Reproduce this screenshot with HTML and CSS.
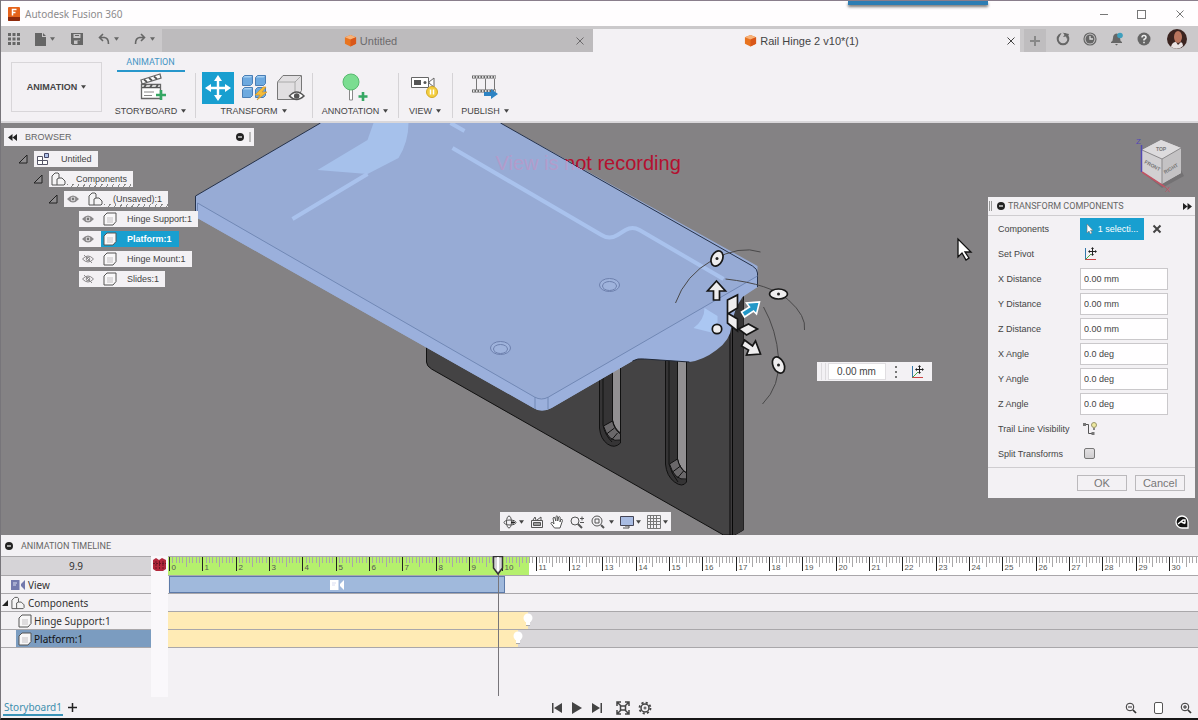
FILE: index.html
```html
<!DOCTYPE html>
<html lang="en">
<head>
<meta charset="utf-8">
<title>Autodesk Fusion 360</title>
<link rel="stylesheet" href="styles.css">
</head>
<body>
<svg class="defs" aria-hidden="true">
  <symbol id="cube" viewBox="0 0 14 14"><path d="M7 1l6 2.500v7L7 13.500 1 10.500v-7z" fill="#e8741f"/><path d="M7 1l6 2.500L7 6 1 3.500z" fill="#f7b27a"/><path d="M7 6l6-2.500v7L7 13.500z" fill="#d9571a"/></symbol>
  <symbol id="close" viewBox="0 0 10 10"><path d="M1.500 1.500l7 7M8.500 1.500l-7 7" stroke="currentColor" fill="none"/></symbol>
  <symbol id="caret" viewBox="0 0 6 4"><path d="M0 0h6L3 4z" fill="currentColor"/></symbol>
  <symbol id="minus" viewBox="0 0 8 8"><circle cx="4" cy="4" r="4" fill="#222"/><path d="M2 4h4" stroke="#fff" stroke-width="1.200"/></symbol>
  <symbol id="tri" viewBox="0 0 10 10"><path d="M9 1v8H1z" fill="#8f8d8f" stroke="#222"/></symbol>
  <symbol id="eye" viewBox="0 0 12 8"><path d="M0 4Q6-3 12 4Q6 11 0 4z" fill="#8a888a"/><circle cx="6" cy="4" r="2.300" fill="#e8e6e8"/><circle cx="6" cy="4" r="1.400" fill="#777"/></symbol>
  <symbol id="eyeoff" viewBox="0 0 12 8"><path d="M.500 4Q6-2 11.500 4Q6 10 .500 4z" fill="none" stroke="#8a888a"/><circle cx="6" cy="4" r="1.800" fill="none" stroke="#8a888a"/><path d="M2 0l8 8" stroke="#8a888a"/></symbol>
  <symbol id="body" viewBox="0 0 14 14"><path d="M4 1h9v8.500L10 13H1V4z" fill="#f8f7f8" stroke="#555" stroke-linejoin="round"/><path d="M4 5h6v6H4z" fill="#dedcde"/></symbol>
  <symbol id="comp" viewBox="0 0 15 14"><path d="M1 13V4l3-3h3l1 1v4h3l3 3v3l-1 1z" fill="#f5f4f5" stroke="#555" stroke-linejoin="round"/><path d="M6 13V7l2-1" fill="none" stroke="#555"/></symbol>
  <symbol id="pivot" viewBox="0 0 14 14"><path d="M2.500 1v11" stroke="#37a" /><path d="M2 12.500h11" stroke="#c44"/><path d="M2.500 12.500L8 7" stroke="#4a4"/><path d="M9.500 1v7M6 4.500h7" stroke="#222"/><path d="M8 2l1.500-2L11 2zM8 7l1.500 2L11 7zM7 3L5 4.500 7 6zM12 3l2 1.500L12 6z" fill="#222"/></symbol>
  <symbol id="cam" viewBox="0 0 14 10"><path d="M0 0h8.500v10H0zM10 4l4-4v10l-4-4z" fill="currentColor"/><path d="M2 3h4M2 5h3" stroke="#d9dcf0"/></symbol>
</svg>

<header class="titlebar">
  <svg class="logo" viewBox="0 0 12 14"><rect width="12" height="14" rx="1" fill="#e5621a"/><path d="M0 10h12v3a1 1 0 0 1-1 1H1a1 1 0 0 1-1-1z" fill="#8e2a0c"/><path d="M4.500 8.500V2.500h4M4.500 5.500h3" stroke="#fff" stroke-width="1.500" fill="none"/></svg>
  <span class="apptitle">Autodesk Fusion 360</span>
  <div class="notch"></div>
  <div class="winbtns">
    <button aria-label="Minimize"><svg width="10" height="10"><path d="M1 5.500h8" stroke="#777"/></svg></button>
    <button aria-label="Maximize"><svg width="10" height="10"><rect x=".500" y="1.500" width="8" height="8" fill="none" stroke="#777"/></svg></button>
    <button aria-label="Close"><svg width="10" height="10"><use href="#close"/></svg></button>
  </div>
</header>

<nav class="tabbar">
  <div class="quick">
    <button aria-label="Data panel"><svg width="12" height="12" fill="#666"><path d="M0 0h3v3H0zM4.500 0h3v3h-3zM9 0h3v3H9zM0 4.500h3v3H0zM4.500 4.500h3v3h-3zM9 4.500h3v3H9zM0 9h3v3H0zM4.500 9h3v3h-3zM9 9h3v3H9z"/></svg></button>
    <button class="wfile" aria-label="File"><svg width="11" height="13" fill="#666"><path d="M0 0h7v4h4v9H0zM8 0l3 3H8z"/></svg><svg class="caret"><use href="#caret"/></svg></button>
    <button class="wsave" aria-label="Save"><svg width="12" height="12"><path d="M0 0h12v12H1.500L0 10.500z" fill="#666"/><path d="M2.500 1h7v4h-7zM3 7.500h6V11H3z" fill="#c8c6c8"/><path d="M7 8h1.500v3H7zM4 2.500h4" stroke="#666" fill="#666"/></svg></button>
    <button class="wundo" aria-label="Undo"><svg width="12" height="12"><path d="M5 1L1.500 4.500 5 8M1.500 4.500h5Q10.500 5 10.500 11" fill="none" stroke="#666" stroke-width="1.600"/></svg><svg class="caret"><use href="#caret"/></svg></button>
    <button aria-label="Redo"><svg width="12" height="12"><path d="M7 1l3.500 3.500L7 8M10.500 4.500h-5Q1.500 5 1.500 11" fill="none" stroke="#666" stroke-width="1.600"/></svg><svg class="caret"><use href="#caret"/></svg></button>
  </div>
  <div class="tab"><span class="tablabel"><svg width="13" height="13"><use href="#cube"/></svg>Untitled</span><button aria-label="Close tab"><svg width="10" height="10"><use href="#close"/></svg></button></div>
  <div class="tab active"><span class="tablabel"><svg width="13" height="13"><use href="#cube"/></svg>Rail Hinge 2 v10*(1)</span><button aria-label="Close tab"><svg width="10" height="10"><use href="#close"/></svg></button></div>
  <div class="utils">
    <button class="plus" aria-label="New tab"><svg width="12" height="12"><path d="M6 1v10M1 6h10" stroke="#888" stroke-width="2"/></svg></button>
    <button aria-label="Extensions"><svg width="14" height="14"><circle cx="7" cy="7" r="5.300" fill="none" stroke="#666" stroke-width="2"/><path d="M6 0l5 5-3 3-4-4z" fill="#cbc9cb"/><path d="M8 1l5 1-2 5-1-2.500L7 5l1.500-2z" fill="#666"/></svg></button>
    <button aria-label="Job status"><svg width="14" height="14"><circle cx="7" cy="7" r="6" fill="none" stroke="#666" stroke-width="1.200"/><circle cx="7" cy="7" r="4.500" fill="#666"/><path d="M7 4v3h3" stroke="#ddd" fill="none" stroke-width="1.300"/></svg></button>
    <button aria-label="Notifications"><svg width="14" height="14"><path d="M1 10Q3 9 3 6Q3 2 6.500 1.500Q10 2 10 6Q10 9 12 10v1H1zM5 12h3l-1.500 1.500z" fill="#666"/><circle cx="10" cy="3.500" r="2.800" fill="#3e9fbd"/></svg></button>
    <button aria-label="Help"><svg width="14" height="14"><circle cx="7" cy="7" r="6.500" fill="#666"/><path d="M5 5.500Q5 3.500 7 3.500T9 5.500Q9 6.500 7 7.500V8.500M7 9.700v1.600" stroke="#eee" stroke-width="1.500" fill="none"/></svg></button>
    <button class="avatar" aria-label="Account"><svg width="20" height="20"><circle cx="10" cy="10" r="10" fill="#3b2420"/><ellipse cx="11" cy="8" rx="4" ry="6" fill="#b9755e"/><path d="M4 18Q5 13 9 13l2 3 3-3q2 1 2 4-5 5-12 1z" fill="#e9e2e2"/></svg></button>
  </div>
</nav>

<section class="ribbon">
  <button class="workspace">ANIMATION<svg class="caret"><use href="#caret"/></svg></button>
  <div class="group storyboard">
    <span class="rtab">ANIMATION</span>
    <div class="icons"><svg width="30" height="30"><g fill="#fff" stroke="#666" stroke-width="1.300"><path d="M5.500 12.500h19v14h-19zM5 8l19-6 1 4L6 12z"/></g><path d="M8 7.500l3 2.500M13 6l3 2.500M18 4.500l3 2.500M6 15.500h18M10 12.500l-2 3M16 12.500l-2 3M22 12.500l-2 3" stroke="#555" stroke-width="1.700"/><path d="M8 20h10M8 23.500h8" stroke="#888"/><path d="M25 18v10M20 23h10" stroke="#35a763" stroke-width="2.600"/></svg></div>
    <button class="rlabel">STORYBOARD<svg class="caret"><use href="#caret"/></svg></button>
  </div>
  <div class="group transform">
    <div class="icons">
      <svg width="32" height="32"><path d="M0 0h32v32H0z" fill="#189fd0"/><path d="M16 6v20M6 16h20" stroke="#fff" stroke-width="2.400"/><path d="M16 3l4 6h-8zM16 29l4-6h-8zM3 16l6-4v8zM29 16l-6-4v8z" fill="#fff"/></svg>
      <svg width="32" height="32"><g fill="#6da9df" stroke="#4a7eb5"><path d="M4.500 5.500l2-2h8v8l-2 2h-8zM17.500 5.500l2-2h8v8l-2 2h-8zM4.500 17.500l2-2h8v8l-2 2h-8zM17.500 17.500l2-2h8v8l-2 2h-8z"/></g><path d="M5 5.500l2-1.500h7l-1.500 1.500zM18 5.500l2-1.500h7l-1.500 1.500zM5 17.500l2-1.500h7l-1.500 1.500z" fill="#a7d1f3"/><path d="M25 15l-8 8h5l-3 5 10-8h-5l4-5z" fill="#f4bd3c" stroke="#d79526" stroke-width=".7"/></svg>
      <svg width="32" height="32"><path d="M3.500 10L9 3.500h18.500v15L22 27.500H3.500z" fill="#e1dfe1" stroke="#777"/><path d="M3.500 10H21l6.500-6.500M21 10v17" stroke="#aaa" fill="none"/><path d="M15.500 24Q22.500 16 30 24Q22.500 31 15.500 24z" fill="#fff" stroke="#555" stroke-width="1.500"/><circle cx="22.700" cy="24" r="2.800" fill="#555"/></svg>
    </div>
    <button class="rlabel">TRANSFORM<svg class="caret"><use href="#caret"/></svg></button>
  </div>
  <div class="group annotation">
    <div class="icons"><svg width="32" height="32"><path d="M10.500 17h3v11h-3z" fill="#fff" stroke="#888"/><circle cx="12" cy="10" r="8" fill="#7bdd91" stroke="#58b96f"/><path d="M24 20v9M19.500 24.500h9" stroke="#35a763" stroke-width="2.600"/></svg></div>
    <button class="rlabel">ANNOTATION<svg class="caret"><use href="#caret"/></svg></button>
  </div>
  <div class="group view">
    <div class="icons"><svg width="32" height="32"><path d="M2.500 5.500h17v10h-17zM20 10l5-4v9l-5-4z" fill="#fff" stroke="#666"/><path d="M5 8h7v5H5z" fill="#555"/><circle cx="16" cy="10.500" r="1.500" fill="#555"/><circle cx="23" cy="20" r="5.500" fill="#f4cf3f" stroke="#d3a927"/><path d="M21.500 17.500v5M24.500 17.500v5" stroke="#fff" stroke-width="1.500"/></svg></div>
    <button class="rlabel">VIEW<svg class="caret"><use href="#caret"/></svg></button>
  </div>
  <div class="group publish">
    <div class="icons"><svg width="32" height="32"><path d="M3 5h24M3 19h24" stroke="#666" stroke-width="3"/><path d="M4 5h23M4 19h23" stroke="#fff" stroke-width="1.400" stroke-dasharray="1.500 1.500"/><path d="M7.500 7v11M16.500 7v11M25.500 7v11" stroke="#777"/><path d="M15 20h7v-3l7 5-7 5v-3h-7z" fill="#2d83c3"/></svg></div>
    <button class="rlabel">PUBLISH<svg class="caret"><use href="#caret"/></svg></button>
  </div>
</section>

<main class="canvas">
  <svg class="scene" viewBox="0 123 1198 412" preserveAspectRatio="xMidYMid slice">
    <defs><linearGradient id="fade" gradientUnits="userSpaceOnUse" x1="575" y1="166" x2="583" y2="152"><stop offset="0" stop-color="#b29bca"/><stop offset="0" stop-color="#b4102f"/></linearGradient></defs>
    <path d="M426 340V362q0 4 5 7L723 535h11l9-5V294h-60z" fill="#444344" stroke="#111"/>
    <path d="M731 300h12v230l-9 5h-3z" fill="#363536"/><path d="M729.500 320v215M732 320v215" stroke="#080808"/>
    <g stroke="#111"><path d="M599 350v78q1 11 8 16t13-1V350z" fill="#353435"/><path d="M612 350v70q2 9 8 13V350z" fill="#929092"/><path d="M602.500 350v75q2 10 9 17" fill="none"/><path d="M603 426l9-5q2 9 8 13v6q-12 3-17-14z" fill="#6a686a"/><path d="M606 434l8-6M611 440l6-7" fill="none"/><path d="M665 350v114q1 12 9 18t12 0V350z" fill="#353435"/><path d="M677 350v109q2 9 9 14V350z" fill="#929092"/><path d="M668.500 350v114q2 9 9 18" fill="none"/><path d="M669 464l8-5q2 10 9 14v6q-12 2-17-15z" fill="#6a686a"/><path d="M672 472l8-6M677 478l6-7" fill="none"/></g>
    <path d="M320 123L195 196v21L533 408q8 5 18 0L632 361l125-74v-21L500 123z" fill="#97abd5"/>
    <path d="M195 200v17L533 408q8 5 18 0L632 361q5-3 12-2l45 3q14-2 27-12 14-10 15-24 2-16 11-29l15-10v-11L548 397q-7 4-14 0L197 203z" fill="#9bb0dc"/>
    <path d="M320 123L195 196v15M500 123L752 266q5 3 5 7v14" stroke="#26324a" fill="none"/>
    <path d="M197 203L534 397q7 4 14 0L757 276M197 203v13M534.500 397v12M547.500 397v12" fill="none" stroke="#7188b5"/>
    <path d="M632 361q5-3 12-2l45 3" fill="none" stroke="#202735"/>
    <path d="M373 123l-6 17-50 30 50 4 31-16q10-16 10-35z" fill="#a6c1eb"/>
    <path d="M367 174L292 219M450 123l14 8M452 148L601 235q8 5 16 0l8-5q7-4 14 0l84 49" fill="none" stroke="#a9c2ed" stroke-width="4"/>
    <path d="M704 308l13 8v18l-24-6q11-8 11-20z" fill="#abc7f2"/>
    <g fill="#9fb3dc" stroke="#6d80ad"><ellipse cx="609" cy="285" rx="10" ry="6.500"/><ellipse cx="609" cy="286" rx="7" ry="4.500"/><ellipse cx="500" cy="348" rx="10" ry="6.500"/><ellipse cx="500" cy="349" rx="7" ry="4.500"/></g>
    <text class="notice" x="495" y="170" fill="url(#fade)">View is not recording</text>
    <g fill="none" stroke="#494849"><path d="M675 303Q685 275 712 260T760 252M725 279Q770 284 788 300T804 330M763 307Q776 330 778 358T762 404"/></g>
    <g fill="#eeedee" stroke="#161616" stroke-width="1.700">
      <ellipse cx="716.500" cy="258.500" rx="5.500" ry="8" transform="rotate(25 716.500 258.500)"/><ellipse cx="778" cy="294" rx="9" ry="5"/><ellipse cx="778" cy="365" rx="5.500" ry="8.500" transform="rotate(-25 778 365)"/>
      <path d="M716 281l9 10h-6v9h-6v-9h-6zM727 300l10-5v13l-10 6zM727 313l10 6v12l-10-8zM738 329l10-5 9 5-11 6zM744 340l8 6 3-5 5 13-14 1 2-5-7-4z"/><circle cx="716.500" cy="329" r="4.700"/>
    </g>
    <path d="M741 312l8-5-3-4 13-1-3 12-3-3-9 6z" fill="#2398c8" stroke="#fff" stroke-width="1.600"/>
    <g fill="#222"><circle cx="716.500" cy="258.500" r="1.500"/><circle cx="778" cy="294" r="1.500"/><circle cx="778" cy="365" r="1.500"/></g>
    <path d="M957.500 239v18l4-4 4 7 3-2-4-6h6z" fill="#fff" stroke="#111" stroke-width="1.300"/>
  </svg>

  <aside class="browser">
    <header><svg width="9" height="7"><path d="M4.500 0v7L0 3.500zM9 0v7L4.500 3.500z" fill="#222"/></svg><span>BROWSER</span><svg class="dot"><use href="#minus"/></svg><i></i></header>
    <ul>
      <li class="l0"><svg class="tri"><use href="#tri"/></svg><div class="node"><svg width="15" height="14"><path d="M1.500 4.500h5v8h-5zM6.500 8.500h5v4h-5zM1.500 8.500h5" fill="#fff" stroke="#556"/><path d="M8.500 1.500h4v4h-4z" fill="#adc0e8" stroke="#446"/></svg><span>Untitled</span></div></li>
      <li class="l1"><svg class="tri"><use href="#tri"/></svg><div class="node wavy"><svg width="15" height="14"><use href="#comp"/></svg><span>Components</span></div></li>
      <li class="l2"><svg class="tri"><use href="#tri"/></svg><div class="node wavy deep"><svg class="eye"><use href="#eye"/></svg><svg width="15" height="14"><use href="#comp"/></svg><span>(Unsaved):1</span></div></li>
      <li class="l3"><div class="node"><svg class="eye"><use href="#eye"/></svg><svg width="14" height="14"><use href="#body"/></svg><span>Hinge Support:1</span></div></li>
      <li class="l3"><div class="node sel"><svg class="eye"><use href="#eye"/></svg><div><svg width="14" height="14"><use href="#body"/></svg><b>Platform:1</b></div></div></li>
      <li class="l3"><div class="node"><svg class="eye"><use href="#eyeoff"/></svg><svg width="14" height="14"><use href="#body"/></svg><span>Hinge Mount:1</span></div></li>
      <li class="l3"><div class="node"><svg class="eye"><use href="#eyeoff"/></svg><svg width="14" height="14"><use href="#body"/></svg><span>Slides:1</span></div></li>
    </ul>
  </aside>

  <svg class="viewcube" viewBox="1132 135 60 60"><path d="M1142 172l20 16 22-12-3-6z" fill="#737173"/><path d="M1161 140l20 8v25l-20 11-19-12v-22z" fill="#d2d0d2"/><path d="M1161 140l20 8-19 11-20-9z" fill="#dddbdd"/><path d="M1162 159v25l19-11v-25z" fill="#c4c2c4"/><path d="M1142 150l20 9 19-11M1162 159v25" fill="none" stroke="#8b898b"/><path d="M1141.500 145v27" stroke="#5148b4" stroke-width="1.500"/><path d="M1142 172l23 15" stroke="#c05464" stroke-width="1.500"/><g class="cubetext"><text transform="translate(1144 163) rotate(28)">FRONT</text><text transform="translate(1165 174) rotate(-30)">RIGHT</text><text x="1156" y="151">TOP</text></g><text class="axis" x="1136" y="144" fill="#5148b4">Z</text><text class="axis" x="1165" y="192" fill="#c05464">X</text></svg>

  <form class="dialog">
    <header><i></i><svg class="dot"><use href="#minus"/></svg><span>TRANSFORM COMPONENTS</span><svg width="9" height="7"><path d="M0 0v7l4.500-3.500zM4.500 0v7L9 3.500z" fill="#222"/></svg></header>
    <div class="fields">
      <span>Components</span><div class="pick"><button type="button" class="selbtn"><svg width="8" height="12"><path d="M1 1v9l2-2 1.500 3 1.500-1-1.500-2.500H7z" fill="#fff" stroke="#777" stroke-width=".6"/></svg>1 selecti...</button><button type="button" class="clear" aria-label="Clear selection"><svg width="10" height="10"><use href="#close"/></svg></button></div>
      <span>Set Pivot</span><button type="button" class="icon" aria-label="Set Pivot"><svg width="14" height="14"><use href="#pivot"/></svg></button>
      <label for="xd">X Distance</label><input id="xd" value="0.00 mm">
      <label for="yd">Y Distance</label><input id="yd" value="0.00 mm">
      <label for="zd">Z Distance</label><input id="zd" value="0.00 mm">
      <label for="xa">X Angle</label><input id="xa" value="0.0 deg">
      <label for="ya">Y Angle</label><input id="ya" value="0.0 deg">
      <label for="za">Z Angle</label><input id="za" value="0.0 deg">
      <span>Trail Line Visibility</span><button type="button" class="icon" aria-label="Trail Line Visibility"><svg width="14" height="14"><path d="M0 2.500h5.500v9h5" fill="none" stroke="#555"/><path d="M0 1h3v3H0zM8.500 10h3v3h-3z" fill="#777"/><circle cx="11" cy="3" r="2.500" fill="#eee9a0" stroke="#99956a"/><path d="M10 6h2v2h-2z" fill="#888"/></svg></button>
      <label for="split">Split Transforms</label><input id="split" type="checkbox">
    </div>
    <footer><button type="button">OK</button><button type="button">Cancel</button></footer>
  </form>

  <div class="hud"><i></i><input aria-label="Distance" value="0.00 mm"><svg width="4" height="12" fill="#777"><path d="M1 0h2v2H1zM1 5h2v2H1zM1 10h2v2H1z"/></svg><svg width="14" height="14"><use href="#pivot"/></svg></div>

  <div class="navbar">
    <button aria-label="Orbit"><svg width="14" height="14" fill="none" stroke="#555"><ellipse cx="7" cy="7.500" rx="6" ry="2.500"/><ellipse cx="6" cy="7" rx="2.500" ry="6"/><path d="M8 7.500h4M10 5.500v4" stroke="#222"/></svg><svg class="caret"><use href="#caret"/></svg></button>
    <button aria-label="Look at"><svg width="14" height="14"><path d="M1.500 5.500h11v7h-11zM3 5l2-3 1 3M7 5l4-3v3" fill="none" stroke="#555"/><path d="M3.500 7.500h7v3h-7z" fill="#999" stroke="#555"/></svg></button>
    <button aria-label="Pan"><svg width="14" height="14"><path d="M4.500 13L1 8.500q0-1.500 1.500-1L4 9 3 3q1-1.500 2 0l.8 3L6 1.500q1-1.500 1.700 0V6l1-4q1-1 1.500.500L10 7l1-2.500q1.500-.5 1.500 1L11 10l-1 3z" fill="#fff" stroke="#555"/></svg></button>
    <button aria-label="Zoom"><svg width="15" height="14" fill="none" stroke="#555"><circle cx="5" cy="6" r="4"/><path d="M8 9l4 4" stroke-width="2"/><path d="M10 3.500h4M12 1.500v4M10 7.500h4"/></svg></button>
    <button aria-label="Fit"><svg width="14" height="14" fill="none" stroke="#555"><circle cx="6" cy="6" r="5"/><path d="M4 4h4v4H4z"/><path d="M10 10l3 3" stroke-width="2"/></svg><svg class="caret far"><use href="#caret"/></svg></button>
    <button aria-label="Display settings"><svg width="14" height="14"><path d="M.500 1.500h13v9H.500z" fill="#a9bce3" stroke="#445"/><path d="M5 11h4v2H3" stroke="#555" fill="none"/></svg><svg class="caret"><use href="#caret"/></svg></button>
    <button aria-label="Grid settings"><svg width="14" height="14"><path d="M.500.500h13v13H.500zM3.500 0v14M6.500 0v14M9.500 0v14M0 3.500h14M0 6.500h14M0 9.500h14" fill="none" stroke="#777"/></svg><svg class="caret"><use href="#caret"/></svg></button>
  </div>
  <svg class="badge" viewBox="0 0 14 14"><path d="M7 1a6 6 0 1 0 0 12h6V7a6 6 0 0 0-6-6z" fill="#111" stroke="#fff" stroke-width="1.300"/><path d="M3 9l5-4h2v3.500M10 8.500L6.500 7" stroke="#fff" stroke-width="1.400" fill="none"/></svg>
</main>

<section class="timeline">
  <header><svg class="dot"><use href="#minus"/></svg><span>ANIMATION TIMELINE</span></header>
  <div class="row ruler"><div class="name time">9.9</div><div class="gutter"><svg width="13" height="14"><path d="M0 2l3-2 3 2 3-2 4 2v9l-3 2H3l-3-2z" fill="#b3273b"/><path d="M3 3v9M6.500 3v9M10 3v9M0 5.500h13" stroke="#6c1423" stroke-dasharray="2 1"/></svg></div><div class="track scale"><svg id="ruler" height="18"></svg></div></div>
  <div class="row"><div class="name"><svg class="camicon" width="14" height="10"><use href="#cam"/></svg>View</div><div class="gutter"></div><div class="track"><div class="clip blue" style="width:336px"><svg width="14" height="10"><use href="#cam"/></svg></div></div></div>
  <div class="row"><div class="name group-name"><svg width="6" height="6"><path d="M6 0v6H0z" fill="#222"/></svg><svg width="14" height="14"><use href="#comp"/></svg>Components</div><div class="gutter"></div><div class="track"></div></div>
  <div class="row part"><div class="name child"><span><svg width="14" height="14"><use href="#body"/></svg>Hinge Support:1</span></div><div class="gutter"></div><div class="track empty"><div class="clip yellow" style="width:360px"></div><svg class="bulb" width="10" height="14"><circle cx="5" cy="5" r="4.500" fill="#fff"/><path d="M3 9h4v3H3z" fill="#fff"/><path d="M3 12.500h4" stroke="#aaa"/></svg></div></div>
  <div class="row part"><div class="name child chosen"><span><svg width="14" height="14"><use href="#body"/></svg>Platform:1</span></div><div class="gutter"></div><div class="track empty"><div class="clip yellow" style="width:350px"></div><svg class="bulb" width="10" height="14"><circle cx="5" cy="5" r="4.500" fill="#fff"/><path d="M3 9h4v3H3z" fill="#fff"/><path d="M3 12.500h4" stroke="#aaa"/></svg></div></div>
  <div class="row rest"><div class="name"></div><div class="gutter"></div></div>
  <div class="playhead"><svg width="12" height="19"><path d="M1.500.500h9V12L6 18 1.500 12z" fill="#d6d4d6" stroke="#333" stroke-width="1.500"/><path d="M6 1v14" stroke="#fff" stroke-width="2"/></svg></div>
  <footer>
    <div class="boards"><a href="#storyboard1">Storyboard1</a><button aria-label="Add storyboard"><svg width="9" height="9"><path d="M4.500 0v9M0 4.500h9" stroke="#222" stroke-width="1.500"/></svg></button></div>
    <div class="play">
      <button aria-label="To start"><svg width="12" height="12" fill="#444"><path d="M1 1h1.500v10H1zM11 1v10L3 6z"/></svg></button>
      <button aria-label="Play"><svg width="12" height="12" fill="#444"><path d="M1 0l10 6-10 6z"/></svg></button>
      <button class="end" aria-label="To end"><svg width="12" height="12" fill="#444"><path d="M9.500 1H11v10H9.500zM1 1v10l8-5z"/></svg></button>
      <button aria-label="Fit timeline"><svg width="14" height="14" fill="none" stroke="#444" stroke-width="1.500"><path d="M1 5V1h4M9 1h4v4M13 9v4H9M5 13H1V9M1 1l4 4M13 1L9 5M1 13l4-4M13 13L9 9M4.500 5h5v4h-5z"/></svg></button>
      <button aria-label="Settings"><svg width="14" height="14" fill="none" stroke="#444"><circle cx="7" cy="7" r="4" stroke-width="1.500"/><circle cx="7" cy="7" r="5.500" stroke-width="1.800" stroke-dasharray="2.160 2.160"/><circle cx="7" cy="7" r="1"/></svg></button>
    </div>
    <div class="zoom">
      <button aria-label="Zoom out"><svg width="12" height="12" fill="none" stroke="#333"><circle cx="5" cy="5" r="3.800"/><path d="M3 5h4"/><path d="M8 8l3 3" stroke-width="1.700"/></svg></button>
      <button aria-label="Zoom level"><svg width="9" height="12"><rect x=".500" y=".500" width="8" height="11" rx="1.500" fill="#fff" stroke="#555"/></svg></button>
      <button aria-label="Zoom in"><svg width="12" height="12" fill="none" stroke="#333"><circle cx="5" cy="5" r="3.800"/><path d="M3 5h4M5 3v4"/><path d="M8 8l3 3" stroke-width="1.700"/></svg></button>
    </div>
  </footer>
</section>
<script src="ruler.js"></script>
</body>
</html>
```
FILE: styles.css
```css
* { box-sizing: border-box; }
body { margin: 0; min-height: 100vh; display: flex; flex-direction: column; background: #f3f1f4; color: #444; font-family: "Liberation Sans", Arial, sans-serif; font-size: 9px; line-height: 12px; border-left: 1px solid #77757a; border-bottom: 2px solid #161616; }
button { border: 0; padding: 0; background: none; color: inherit; font: inherit; display: flex; align-items: center; justify-content: center; }
input { font: inherit; color: inherit; margin: 0; border-radius: 0; min-width: 0; }
svg { flex: none; display: block; }
.defs { display: none; }
.caret { width: 5px; height: 4px; margin-left: 4px; }
.dot { width: 8px; height: 8px; }

.titlebar { position: relative; display: flex; align-items: center; height: 26px; padding: 0 13px 0 7px; background: #fffdfe; border-top: 1px solid #8a7e8c; }
.logo { width: 12px; height: 14px; }
.apptitle { margin-left: 5px; font-family: "Noto Sans", sans-serif; font-size: 10px; color: #8c8a8c; }
.notch { position: absolute; top: 0; right: 210px; width: 140px; height: 4px; background: #2d7db3; box-shadow: 0 2px 3px #777; }
.winbtns { display: flex; gap: 28px; margin-left: auto; color: #777; }

.tabbar { display: flex; height: 26px; background: #cbc9cb; }
.quick { display: flex; align-items: center; width: 161px; padding-left: 7px; color: #666; }
.quick button { margin-right: 15px; }
.quick .wfile { margin-right: 16px; }
.tab { flex: 1; display: flex; align-items: center; margin-top: 3px; padding: 0 8px; background: #bdbbbd; color: #6c6a6c; font-size: 11px; }
.tab.active { background: #f3f1f4; color: #444; padding-right: 4px; }
.tablabel { flex: 1; display: flex; justify-content: center; align-items: center; gap: 3px; padding-right: 4px; }
.utils { display: flex; align-items: center; gap: 13px; width: 178px; padding-left: 4px; }
.utils .plus { align-self: stretch; width: 22px; margin: 3px -3px 0 0; background: #bfbdbf; }
.utils .avatar { margin-left: 3px; }

.ribbon { display: flex; height: 71px; border-bottom: 2px solid #d9d7da; }
.workspace { width: 91px; height: 50px; margin: 10px 4px 0 10px; border: 1px solid #d8d6d9; font-weight: bold; }
.group { display: flex; flex-direction: column; align-items: center; position: relative; padding-top: 20px; }
.group + .group::before { content: ""; position: absolute; left: 0; top: 21px; width: 1px; height: 45px; background: #d5d3d6; }
.storyboard { width: 89px; padding: 0; }
.transform { width: 117px; }
.annotation { width: 86px; }
.view { width: 54px; }
.publish { width: 66px; }
.rtab { width: 68px; height: 20px; padding-top: 4px; text-align: center; color: #4595c5; border-bottom: 2px solid #2897cb; font-family: Roboto, sans-serif; }
.icons { display: flex; gap: 4px; height: 33px; }
.rlabel { white-space: nowrap; }

.canvas { position: relative; flex: 1; min-height: 412px; overflow: hidden; background: #848284; }
.scene { position: absolute; left: 0; top: 0; width: 100%; height: 100%; }
.notice { font-size: 20px; }
.browser { position: absolute; left: 3px; top: 5px; width: 250px; }
.browser header { display: flex; align-items: center; height: 18px; padding: 0 2px 0 4px; background: #f3f1f4; color: #666; }
.browser header span { margin: 0 auto 0 8px; }
.browser header i { width: 3px; height: 10px; margin-left: 5px; border-left: 2px solid #bbb; }
.browser ul { list-style: none; margin: 5px 0 0; padding: 0; display: flex; flex-direction: column; gap: 4px; }
.browser li { display: flex; align-items: center; height: 16px; gap: 6px; }
.tri { width: 10px; height: 10px; }
.l0 { padding-left: 14px; }
.l1 { padding-left: 29px; }
.l2 { padding-left: 44px; }
.l3 { padding-left: 75px; }
.node { display: flex; align-items: center; align-self: stretch; padding: 0 6px 0 2px; background: #f3f1f4; }
.node span, .node b { margin-left: 10px; white-space: nowrap; }
.wavy { background: repeating-linear-gradient(120deg, #888 0 1px, #f3f1f4 1px 5px) 18px 100% / 100% 3px no-repeat, #f3f1f4; }
.deep { background-position: 40px 100%, 0 0; }
.eye { width: 12px; height: 8px; margin: 0 9px 0 1px; }
.sel { padding: 0; padding-left: 2px; }
.sel .eye { margin-right: 7px; }
.sel div { display: flex; align-items: center; align-self: stretch; padding: 0 7px 0 2px; background: #189fd0; color: #fff; }
.viewcube { position: absolute; top: 12px; right: 6px; width: 60px; height: 60px; }
.cubetext { font-size: 5px; font-weight: bold; fill: #777; }
.axis { font-size: 8px; }

.dialog { position: absolute; right: 3px; top: 74px; width: 207px; background: #f3f1f4; }
.dialog header { display: flex; align-items: center; height: 19px; padding: 0 3px 0 1px; border-bottom: 1px solid #cfcdd0; color: #666; font-family: Roboto, sans-serif; }
.dialog header i { width: 3px; height: 10px; border-left: 1px solid #999; border-right: 1px solid #999; margin-right: 5px; }
.dialog header span { margin: 0 auto 0 3px; }
.fields { display: grid; grid-template-columns: 82px 88px; grid-auto-rows: 25px; align-items: center; padding: 0 10px; white-space: nowrap; }
.fields input:not([type]) { height: 22px; padding: 0 3px; background: #fffeff; border: 1px solid #cac8cb; }
.pick { display: flex; gap: 8px; }
.selbtn { width: 64px; height: 22px; gap: 4px; flex: none; background: #189fd0; color: #fff; }
.clear svg { stroke-width: 2px; }
.icon { justify-self: start; margin-left: 3px; }
.fields input[type="checkbox"] { appearance: none; width: 11px; height: 11px; margin-left: 4px; border: 1px solid #777; border-radius: 2px; background: linear-gradient(#e2e0e2, #cfcdcf); }
.dialog footer { display: flex; justify-content: flex-end; gap: 8px; margin-top: 1px; padding: 7px 10px; border-top: 1px solid #cfcdd0; }
.dialog footer button { width: 50px; height: 16px; border: 1px solid #bbb9bc; font-size: 11px; color: #777; }

.hud { position: absolute; left: calc(50% + 217px); top: 239px; width: 115px; height: 19px; display: flex; align-items: center; padding: 1px; background: #f3f1f4; font-size: 10px; }
.hud i { width: 5px; height: 17px; margin: 0 2px 0 3px; border: 1px solid #dddbde; border-width: 0 1px; }
.hud input { width: 58px; height: 17px; border: 1px solid #e0dee1; background: #fff; text-align: center; padding: 0; }
.hud svg { margin-left: 8px; }
.hud svg + svg { margin-left: 12px; }
.navbar { position: absolute; left: calc(50% - 100px); bottom: 4px; width: 171px; height: 19px; display: flex; align-items: center; justify-content: space-between; padding: 0 3px; background: #f3f1f4; }
.navbar .caret { margin-left: 2px; }
.navbar .far { margin-left: 4px; }
.badge { position: absolute; right: 9px; bottom: 6px; width: 14px; height: 14px; }

.timeline { position: relative; font-family: "Noto Sans", sans-serif; color: #333; }
.timeline > header { display: flex; align-items: center; gap: 8px; height: 21px; padding-left: 4px; font-family: Roboto, sans-serif; color: #666; }
.row { display: flex; height: 18px; font-size: 10px; }
.name { display: flex; align-items: center; width: 150px; gap: 3px; padding-left: 10px; border-bottom: 1px solid #a9a7aa; white-space: nowrap; }
.gutter { width: 17px; background: #faf8fb; padding: 2px; }
.track { flex: 1; display: flex; min-width: 0; border-bottom: 1px solid #a9a7aa; }
.ruler { height: 20px; }
.time { justify-content: center; padding: 0; background: #d6d4d7; border-top: 1px solid #a9a7aa; }
.scale { overflow: hidden; background: linear-gradient(90deg, #b5f06d 361px, #fff 361px); border-top: 1px solid #a9a7aa; }
#ruler { width: 100%; }
#ruler text { font-family: "Liberation Sans", Arial, sans-serif; font-size: 8px; fill: #555; }
.camicon { color: #7379ad; }
.group-name { padding-left: 1px; }
.child { padding-left: 15px; }
.child span { display: flex; align-items: center; gap: 2px; flex: 1; align-self: stretch; padding-left: 2px; }
.chosen span { background: #7b9cc0; color: #111; }
.clip { height: 17px; flex: none; }
.blue { display: flex; align-items: center; justify-content: center; margin-left: 1px; background: #a0b9dc; border: 1px solid #5d7aa8; color: #fff; }
.yellow { background: #ffebb5; }
.empty { background: #d9d7da; }
.bulb { margin: 1px 0 0 -5px; }
.rest { height: 49px; }
.rest .name { border: 0; }
.playhead { position: absolute; left: 491px; top: 21px; bottom: 22px; width: 12px; background: linear-gradient(90deg, transparent 6px, #77757a 6px 7px, transparent 7px); }
.timeline > footer { display: flex; justify-content: space-between; align-items: center; height: 21px; font-size: 10px; }
.boards { flex: 1; display: flex; align-items: center; gap: 5px; padding-left: 2px; align-self: stretch; }
.boards a { color: #3d8fae; text-decoration: none; border-bottom: 2px solid #3b94b8; padding: 2px 1px 1px; }
.play { display: flex; align-items: center; gap: 8px; margin-left: 7px; }
.play .end { margin-right: 5px; }
.zoom { flex: 1; display: flex; align-items: center; justify-content: flex-end; gap: 17px; padding-right: 6px; }
```
FILE: ruler.js
```js
const ruler = document.getElementById("ruler");
const unit = 100 / 3;
const labelRoom = 12;

function drawRuler() {
  const width = ruler.clientWidth;
  let marks = "";
  for (let i = 0; 1 + i * unit / 10 < width; i++) {
    const x = Math.round(1 + i * unit / 10) + 0.5;
    const major = i % 10 === 0;
    const length = major ? 14 : i % 5 === 0 ? 10 : 6;
    marks += `<path d="M${x} 0v${length}" stroke="${major ? "#222" : "#a9a7a9"}"/>`;
    if (major && x + labelRoom < width) {
      marks += `<text x="${x + 2}" y="13">${i / 10}</text>`;
    }
  }
  ruler.innerHTML = marks;
}

drawRuler();
window.addEventListener("resize", drawRuler);
```
